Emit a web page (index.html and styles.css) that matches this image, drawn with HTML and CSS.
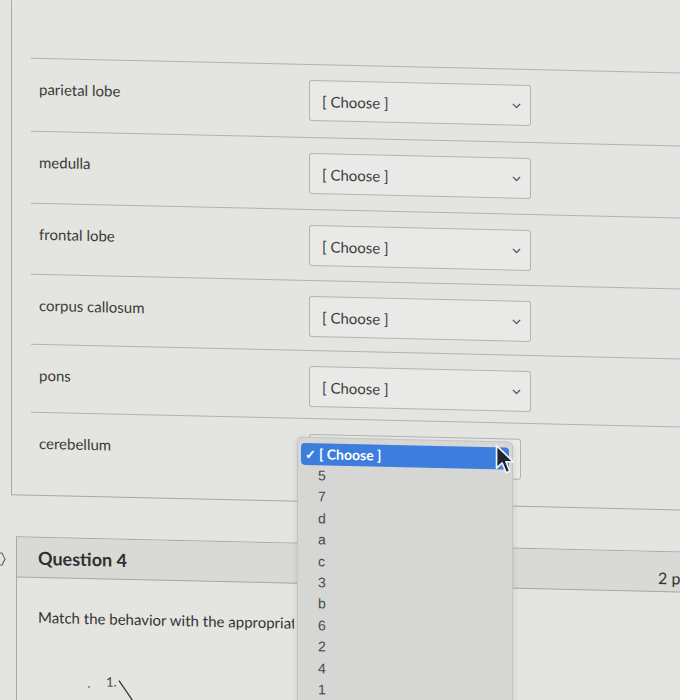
FILE: index.html
```html
<!DOCTYPE html>
<html lang="en">
<head>
<meta charset="utf-8">
<title>Quiz</title>
<link rel="stylesheet" href="styles.css">
</head>
<body>
<div class="page">
  <section class="card match">
    <div class="card-top"></div>
    <div class="row">
      <div class="label">parietal lobe</div>
      <div class="select"><span>[ Choose ]</span><svg class="chev" viewBox="0 0 10 6" width="9" height="6"><path d="M1 1 L5 5 L9 1" fill="none" stroke="#5a5a5a" stroke-width="1.4"/></svg></div>
    </div>
    <div class="row">
      <div class="label">medulla</div>
      <div class="select"><span>[ Choose ]</span><svg class="chev" viewBox="0 0 10 6" width="9" height="6"><path d="M1 1 L5 5 L9 1" fill="none" stroke="#5a5a5a" stroke-width="1.4"/></svg></div>
    </div>
    <div class="row">
      <div class="label">frontal lobe</div>
      <div class="select"><span>[ Choose ]</span><svg class="chev" viewBox="0 0 10 6" width="9" height="6"><path d="M1 1 L5 5 L9 1" fill="none" stroke="#5a5a5a" stroke-width="1.4"/></svg></div>
    </div>
    <div class="row">
      <div class="label">corpus callosum</div>
      <div class="select"><span>[ Choose ]</span><svg class="chev" viewBox="0 0 10 6" width="9" height="6"><path d="M1 1 L5 5 L9 1" fill="none" stroke="#5a5a5a" stroke-width="1.4"/></svg></div>
    </div>
    <div class="row">
      <div class="label">pons</div>
      <div class="select"><span>[ Choose ]</span><svg class="chev" viewBox="0 0 10 6" width="9" height="6"><path d="M1 1 L5 5 L9 1" fill="none" stroke="#5a5a5a" stroke-width="1.4"/></svg></div>
    </div>
    <div class="row last">
      <div class="label">cerebellum</div>
      <div class="select open"></div>
    </div>
  </section>

  <div class="q4wrap">
    <svg class="flag" viewBox="0 0 12 14" width="12" height="14"><path d="M1 1 L8 1 L11 7 L8 13 L1 13 Z" fill="none" stroke="#6a6a6a" stroke-width="1.2"/></svg>
    <section class="card question">
      <header class="q-head">
        <h2>Question 4</h2>
        <span class="pts">2 pts</span>
      </header>
      <div class="q-body">
        <p>Match the behavior with the appropriate part of the brain.</p>
        <div class="figure">
          <span class="dot"></span>
          <span class="num">1.</span>
          <svg class="pointer" viewBox="0 0 16 22" width="16" height="22"><path d="M1 1 L15 21" stroke="#3a3a3a" stroke-width="1.3"/></svg>
        </div>
      </div>
    </section>
  </div>

  <ul class="popup">
    <li class="chosen"><span class="tick">✓</span>[ Choose ]</li>
    <li>5</li>
    <li>7</li>
    <li>d</li>
    <li>a</li>
    <li>c</li>
    <li>3</li>
    <li>b</li>
    <li>6</li>
    <li>2</li>
    <li>4</li>
    <li>1</li>
  </ul>

  <svg class="cursor" viewBox="0 0 14 22" width="20" height="31"><path d="M1 1 L1 17 L5 13.2 L7.8 20 L10.4 18.9 L7.7 12.3 L13 12.3 Z" fill="#1e2530" stroke="#f4f4f4" stroke-width="1.2" stroke-linejoin="round"/></svg>
</div>
</body>
</html>
```

FILE: styles.css
```css
* { box-sizing: border-box; }
html, body { margin: 0; padding: 0; }
body {
  background: #e4e4e1;
  font-family: Lato, "Open Sans", "Liberation Sans", sans-serif;
  color: #3b3b3b;
  overflow: hidden;
}
.page {
  position: relative;
  width: 680px;
  height: 720px;
  overflow: hidden;
  transform: skewY(1.3deg);
  transform-origin: 0 0;
}
.card.match {
  margin-left: 11px;
  margin-right: -30px;
  border-left: 1px solid #a8a8a6;
  border-bottom: 1px solid #a8a8a6;
}
.card-top { height: 57px; }
.row {
  margin-left: 19px;
  height: 71px;
  border-top: 1px solid #b2b2b0;
  display: grid;
  grid-template-columns: 278px 222px;
  align-items: start;
}
.row:nth-child(2) { height: 73px; }
.row:nth-child(3) { height: 72px; }
.row:nth-child(4) { height: 71px; }
.row:nth-child(5) { height: 70px; }
.row:nth-child(6) { height: 68px; }
.row.last { height: 83px; }
.label {
  padding: 21px 0 0 8px;
  font-size: 15px;
  line-height: 18px;
  color: #3a3a3a;
}
.select {
  margin-top: 15px;
  height: 41px;
  border: 1px solid #b4b4b2;
  border-radius: 3px;
  background: #e9e9e7;
  display: flex;
  align-items: center;
  justify-content: space-between;
  padding: 0 9px 0 12px;
  font-size: 15px;
  color: #3d3d3d;
}
.select.open { width: 212px; }
.chev { display: block; }

.q4wrap {
  margin-top: 41px;
  display: flex;
  align-items: flex-start;
}
.flag { margin: 16px 0 0 -6px; flex: none; }
.card.question {
  margin-left: 10px;
  flex: 1;
  margin-right: -40px;
  border: 1px solid #a8a8a6;
  border-right: none;
}
.q-head {
  height: 40px;
  background: #d9d9d6;
  border-bottom: 1px solid #a8a8a6;
  display: flex;
  align-items: center;
  justify-content: space-between;
  padding: 0 14px 0 21px;
}
.q-head h2 {
  margin: 0;
  font-size: 18px;
  font-weight: 700;
  color: #2f2f2f;
}
.pts {
  font-size: 16px;
  padding-top: 12px;
  color: #333;
  width: 48px;
}
.q-body { padding: 30px 0 0 21px; }
.q-body p {
  margin: 0;
  width: 256px;
  overflow: hidden;
  font-size: 15px;
  line-height: 18px;
  color: #333;
  white-space: nowrap;
}
.figure {
  display: flex;
  align-items: flex-start;
  margin: 46px 0 0 50px;
  height: 30px;
}
.dot {
  width: 2px; height: 2px;
  background: #777;
  border-radius: 50%;
  margin: 13px 16px 0 0;
}
.num { font-size: 13px; line-height: 16px; color: #444; }
.pointer { margin: 6px 0 0 1px; }

.popup {
  position: absolute;
  left: 297px;
  top: 430px;
  width: 216px;
  height: 300px;
  margin: 0;
  padding: 5px 3px 0;
  list-style: none;
  background: #d6d6d4;
  border: 1px solid #c4c4c2;
  border-radius: 5px;
  box-shadow: 0 2px 6px rgba(0,0,0,0.12);
  font-family: "Liberation Sans", Arial, sans-serif;
  font-size: 14px;
  color: #4a4a4a;
}
.popup li {
  height: 21.4px;
  line-height: 21.4px;
  padding-left: 17px;
}
.popup li.chosen {
  height: 22px;
  line-height: 22px;
  background: #3c7ddd;
  color: #fff;
  border-radius: 4px;
  padding-left: 4px;
  font-family: Lato, "Liberation Sans", sans-serif;
  font-size: 14px;
  font-weight: 700;
}
.tick { margin-right: 3px; font-size: 13px; }
.cursor {
  position: absolute;
  left: 495px;
  top: 433px;
}
```
